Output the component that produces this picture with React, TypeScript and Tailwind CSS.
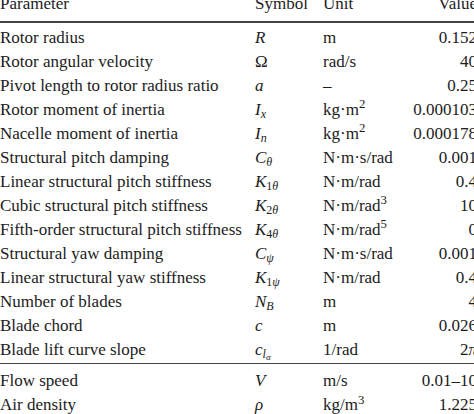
import React from "react";

type Row = {
  name: string;
  symbol: React.ReactNode;
  unit: React.ReactNode;
  value: React.ReactNode;
};

const I = ({ children }: { children: React.ReactNode }) => (
  <span className="italic">{children}</span>
);

const Sub = ({ children }: { children: React.ReactNode }) => (
  <sub className="text-[12px] leading-none relative top-[0.3em] align-baseline">
    {children}
  </sub>
);

const mainRows: Row[] = [
  { name: "Rotor radius", symbol: <I>R</I>, unit: "m", value: "0.152" },
  { name: "Rotor angular velocity", symbol: "Ω", unit: "rad/s", value: "40" },
  { name: "Pivot length to rotor radius ratio", symbol: <I>a</I>, unit: "–", value: "0.25" },
  {
    name: "Rotor moment of inertia",
    symbol: (
      <>
        <I>I</I>
        <Sub>
          <I>x</I>
        </Sub>
      </>
    ),
    unit: (
      <>
        kg·m<sup>2</sup>
      </>
    ),
    value: "0.000103",
  },
  {
    name: "Nacelle moment of inertia",
    symbol: (
      <>
        <I>I</I>
        <Sub>
          <I>n</I>
        </Sub>
      </>
    ),
    unit: (
      <>
        kg·m<sup>2</sup>
      </>
    ),
    value: "0.000178",
  },
  {
    name: "Structural pitch damping",
    symbol: (
      <>
        <I>C</I>
        <Sub>
          <I>θ</I>
        </Sub>
      </>
    ),
    unit: "N·m·s/rad",
    value: "0.001",
  },
  {
    name: "Linear structural pitch stiffness",
    symbol: (
      <>
        <I>K</I>
        <Sub>
          1<I>θ</I>
        </Sub>
      </>
    ),
    unit: "N·m/rad",
    value: "0.4",
  },
  {
    name: "Cubic structural pitch stiffness",
    symbol: (
      <>
        <I>K</I>
        <Sub>
          2<I>θ</I>
        </Sub>
      </>
    ),
    unit: (
      <>
        N·m/rad<sup>3</sup>
      </>
    ),
    value: "10",
  },
  {
    name: "Fifth-order structural pitch stiffness",
    symbol: (
      <>
        <I>K</I>
        <Sub>
          4<I>θ</I>
        </Sub>
      </>
    ),
    unit: (
      <>
        N·m/rad<sup>5</sup>
      </>
    ),
    value: "0",
  },
  {
    name: "Structural yaw damping",
    symbol: (
      <>
        <I>C</I>
        <Sub>
          <I>ψ</I>
        </Sub>
      </>
    ),
    unit: "N·m·s/rad",
    value: "0.001",
  },
  {
    name: "Linear structural yaw stiffness",
    symbol: (
      <>
        <I>K</I>
        <Sub>
          1<I>ψ</I>
        </Sub>
      </>
    ),
    unit: "N·m/rad",
    value: "0.4",
  },
  {
    name: "Number of blades",
    symbol: (
      <>
        <I>N</I>
        <Sub>
          <I>B</I>
        </Sub>
      </>
    ),
    unit: "m",
    value: "4",
  },
  { name: "Blade chord", symbol: <I>c</I>, unit: "m", value: "0.026" },
  {
    name: "Blade lift curve slope",
    symbol: (
      <>
        <I>c</I>
        <Sub>
          <I>l</I>
          <sub className="text-[9px] leading-none relative top-[0.25em] align-baseline italic">
            α
          </sub>
        </Sub>
      </>
    ),
    unit: "1/rad",
    value: (
      <>
        2<I>π</I>
      </>
    ),
  },
];

const flowRows: Row[] = [
  { name: "Flow speed", symbol: <I>V</I>, unit: "m/s", value: "0.01–10" },
  {
    name: "Air density",
    symbol: <I>ρ</I>,
    unit: (
      <>
        kg/m<sup>3</sup>
      </>
    ),
    value: "1.225",
  },
];

function TableRow({ row }: { row: Row }) {
  return (
    <div className="flex h-[24px] leading-[24px] whitespace-nowrap">
      <div className="w-[255px] shrink-0">{row.name}</div>
      <div className="w-[68px] shrink-0">{row.symbol}</div>
      <div className="flex-1">{row.unit}</div>
      <div className="text-right">{row.value}</div>
    </div>
  );
}

export default function App() {
  return (
    <div className="w-[474px] h-[414px] overflow-hidden bg-white text-[#1c1c1c] font-['Liberation_Serif',serif] text-[17px]">
      <div className="w-[477px] -mt-[8px]">
        {/* Header */}
        <TableRow row={{ name: "Parameter", symbol: "Symbol", unit: "Unit", value: "Value" }} />
        <div className="mt-[5px] h-[1.5px] bg-[#444]" />

        <div className="mt-[3px]">
          {mainRows.map((row) => (
            <TableRow key={row.name} row={row} />
          ))}
        </div>

        <div className="mt-[1px] h-[1.5px] bg-[#444]" />

        <div className="mt-[5px]">
          {flowRows.map((row) => (
            <TableRow key={row.name} row={row} />
          ))}
        </div>
      </div>
    </div>
  );
}
